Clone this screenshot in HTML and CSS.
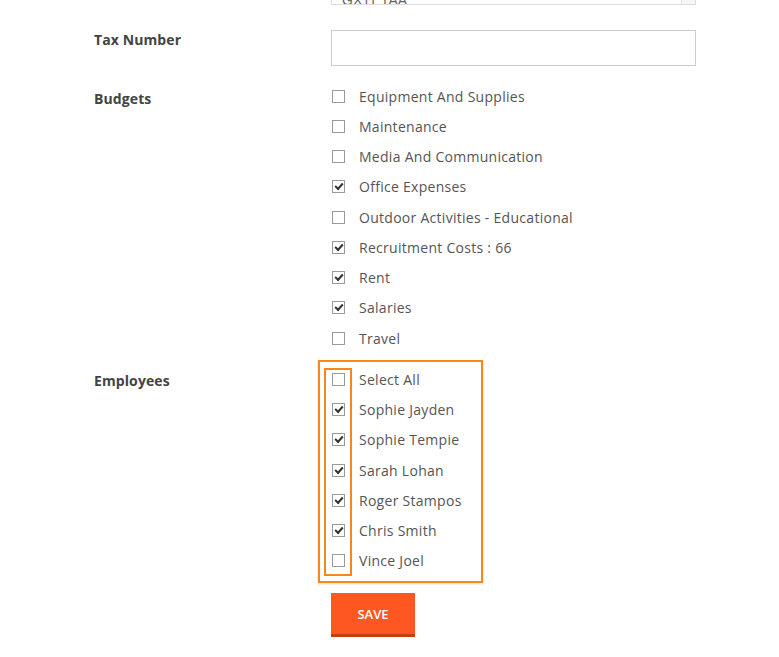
FILE: index.html
```html
<!DOCTYPE html>
<html>
<head>
<meta charset="utf-8">
<link rel="stylesheet" href="styles.css">
</head>
<body>
<form class="form">
  <div class="row">
    <div class="label"></div>
    <div class="field">
      <div class="select"><span class="select-text">GX11 1AA</span><span class="select-arrow"></span></div>
    </div>
  </div>
  <div class="row">
    <div class="label">Tax Number</div>
    <div class="field"><div class="input"></div></div>
  </div>
  <div class="row row-budgets">
    <div class="label label-list">Budgets</div>
    <div class="field">
      <ul class="checks">
        <li class="check"><span class="box"></span>Equipment And Supplies</li>
        <li class="check"><span class="box"></span>Maintenance</li>
        <li class="check"><span class="box"></span>Media And Communication</li>
        <li class="check"><span class="box on"></span>Office Expenses</li>
        <li class="check"><span class="box"></span>Outdoor Activities - Educational</li>
        <li class="check"><span class="box on"></span>Recruitment Costs : 66</li>
        <li class="check"><span class="box on"></span>Rent</li>
        <li class="check"><span class="box on"></span>Salaries</li>
        <li class="check"><span class="box"></span>Travel</li>
      </ul>
    </div>
  </div>
  <div class="row row-employees">
    <div class="label label-emp">Employees</div>
    <div class="field">
      <div class="highlight">
        <div class="highlight-col"></div>
        <ul class="checks">
          <li class="check"><span class="box"></span>Select All</li>
          <li class="check"><span class="box on"></span>Sophie Jayden</li>
          <li class="check"><span class="box on"></span>Sophie Tempie</li>
          <li class="check"><span class="box on"></span>Sarah Lohan</li>
          <li class="check"><span class="box on"></span>Roger Stampos</li>
          <li class="check"><span class="box on"></span>Chris Smith</li>
          <li class="check"><span class="box"></span>Vince Joel</li>
        </ul>
      </div>
      <button type="button" class="save">SAVE</button>
    </div>
  </div>
</form>
</body>
</html>
```
FILE: styles.css
```css
html, body {
  margin: 0;
  padding: 0;
  background: #fff;
  overflow: hidden;
}
body {
  font-family: "Open Sans", "DejaVu Sans", sans-serif;
  color: #555;
  font-size: 14px;
}
.form {
  margin-top: -30px;
  padding-left: 94px;
}
.row {
  display: grid;
  grid-template-columns: 237px 365px;
  margin-bottom: 25px;
}
.label {
  font-weight: 700;
  color: #444;
  font-size: 14px;
  padding-top: 0;
  line-height: 20px;
  letter-spacing: 0.1px;
}
.select {
  height: 35px;
  box-sizing: border-box;
  border: 1px solid #ddd;
  position: relative;
  overflow: hidden;
}
.select-text {
  position: absolute;
  left: 10px;
  top: 21px;
  font-family: "Liberation Sans", sans-serif;
  font-size: 14px;
  color: #666;
  line-height: 16px;
}
.select-arrow {
  position: absolute;
  right: 0;
  top: 0;
  bottom: 0;
  width: 13px;
  border-left: 1px solid #e5e5e5;
  background: #f6f6f6;
}
.input {
  height: 36px;
  box-sizing: border-box;
  border: 1px solid #ccc;
}
.row-budgets {
  margin-top: -10px;
  margin-bottom: 0;
}
.label-list {
  padding-top: 8px;
}
.checks {
  list-style: none;
  margin: 0;
  padding: 0;
}
.check {
  display: flex;
  align-items: center;
  height: 30.25px;
  font-size: 14px;
  color: #555;
  letter-spacing: 0.28px;
}
.box {
  width: 13px;
  height: 13px;
  box-sizing: border-box;
  border: 1px solid #9a9a9a;
  background: #fff;
  margin-left: 1px;
  margin-right: 14px;
  position: relative;
  flex: none;
}
.box.on::after {
  content: "";
  position: absolute;
  left: 2px;
  top: 2px;
  width: 6px;
  height: 3px;
  border-left: 2px solid #333;
  border-bottom: 2px solid #333;
  transform: rotate(-48deg);
  transform-origin: center;
}
.row-employees {
  margin-top: 7px;
}
.label-emp {
  padding-top: 11px;
}
.highlight {
  position: relative;
  margin-left: -13px;
  width: 165px;
  box-sizing: border-box;
  border: 2px solid #f7861c;
  padding: 2px 0 5px 11px;
  box-shadow: 0 1px 2px rgba(0,0,0,0.15);
}
.highlight-col {
  position: absolute;
  left: 4px;
  top: 6px;
  width: 28px;
  height: 208px;
  box-sizing: border-box;
  border: 2px solid #f7861c;
}
.save {
  display: block;
  margin-top: 10px;
  width: 84px;
  height: 44px;
  border: 0;
  border-bottom: 3px solid #c6400f;
  background: #ff5722;
  color: #fff;
  font-family: "Open Sans", sans-serif;
  font-size: 13px;
  font-weight: 600;
  padding: 0;
  cursor: pointer;
}
```
